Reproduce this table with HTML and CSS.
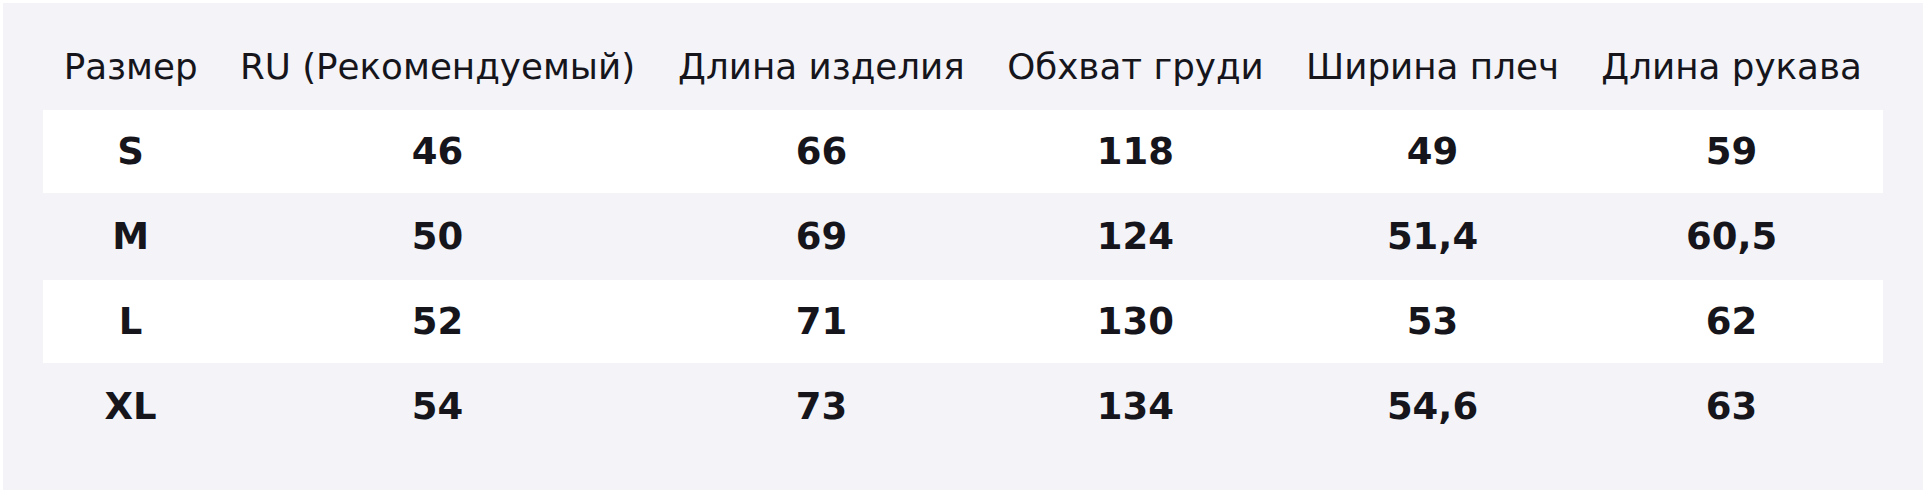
FILE: index.html
```html
<!DOCTYPE html>
<html lang="ru">
<head>
<meta charset="utf-8">
<title>Таблица размеров</title>
<link rel="stylesheet" href="styles.css">
</head>
<body>
<div class="sizes">
  <table class="size-table">
    <thead>
      <tr>
        <th>Размер</th>
        <th>RU (Рекомендуемый)</th>
        <th>Длина изделия</th>
        <th>Обхват груди</th>
        <th>Ширина плеч</th>
        <th>Длина рукава</th>
      </tr>
    </thead>
    <tbody>
      <tr class="light"><td>S</td><td>46</td><td>66</td><td>118</td><td>49</td><td>59</td></tr>
      <tr><td>M</td><td>50</td><td>69</td><td>124</td><td>51,4</td><td>60,5</td></tr>
      <tr class="light"><td>L</td><td>52</td><td>71</td><td>130</td><td>53</td><td>62</td></tr>
      <tr><td>XL</td><td>54</td><td>73</td><td>134</td><td>54,6</td><td>63</td></tr>
    </tbody>
  </table>
</div>
</body>
</html>
```
FILE: styles.css
```css
html, body {
  margin: 0;
  padding: 0;
  background: #ffffff;
}

body {
  padding: 3px;
  font-family: "DejaVu Sans", "Noto Sans", sans-serif;
  color: #15151b;
}

.sizes {
  background: #f3f3f8;
  padding: 40px 40px 40px 40px;
  height: 487px;
  box-sizing: border-box;
}

.size-table {
  width: 100%;
  border-collapse: separate;
  border-spacing: 0 2px;
  line-height: 41px;
}

.size-table th {
  font-size: 35.7px;
  font-weight: normal;
  text-align: center;
  white-space: nowrap;
  padding: 1px 20px 21px;
}

.size-table td {
  font-size: 37px;
  font-weight: bold;
  text-align: center;
  white-space: nowrap;
  padding: 21px 20px;
}

.size-table tr.light td {
  background: #ffffff;
}
```
